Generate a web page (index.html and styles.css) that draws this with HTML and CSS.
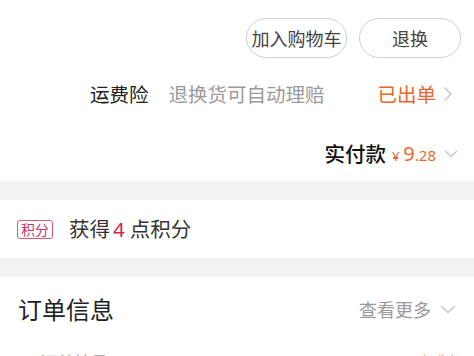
FILE: index.html
```html
<!DOCTYPE html>
<html lang="zh-CN">
<head>
<meta charset="utf-8">
<link rel="stylesheet" href="styles.css">
</head>
<body>
<div class="page">
  <div class="actions">
    <button class="pill pill-cart">加入购物车</button>
    <button class="pill pill-return">退换</button>
  </div>

  <div class="insure">
    <div class="insure-left">
      <span class="insure-label">运费险</span>
      <span class="insure-desc">退换货可自动理赔</span>
    </div>
    <div class="insure-right">
      <span class="insure-status">已出单</span>
      <svg class="chev-right" width="10" height="16" viewBox="0 0 10 16"><path d="M1.5 1.5 L8 8 L1.5 14.5" fill="none" stroke="#c4c4c4" stroke-width="1.4"/></svg>
    </div>
  </div>

  <div class="total">
    <span class="total-label">实付款</span>
    <span class="price"><span class="yen">¥</span><span class="int">9</span><span class="dec">.28</span></span>
    <svg class="chev-down" width="14" height="8" viewBox="0 0 14 8"><path d="M1 1 L7 6.5 L13 1" fill="none" stroke="#c4c4c4" stroke-width="1.3"/></svg>
  </div>

  <div class="band"></div>

  <div class="points">
    <span class="badge">积分</span>
    <span class="points-text">获得<span class="num">4</span>点积分</span>
  </div>

  <div class="band"></div>

  <div class="info-head">
    <span class="info-title">订单信息</span>
    <span class="info-more">查看更多
      <svg class="chev-down more-chev" width="16" height="9" viewBox="0 0 16 9"><path d="M1 1 L8 7.5 L15 1" fill="none" stroke="#c4c4c4" stroke-width="1.3"/></svg>
    </span>
  </div>

  <div class="info-row">
    <span class="info-key">订单编号</span>
    <span class="info-copy">复制</span>
  </div>
</div>
</body>
</html>
```

FILE: styles.css
```css
* { box-sizing: border-box; }
html, body {
  margin: 0;
  padding: 0;
  background: #ffffff;
}
body {
  font-family: "Noto Sans CJK SC", "Noto Sans", sans-serif;
  color: #222;
  width: 474px;
  height: 356px;
  overflow: hidden;
}
.page {
  display: flex;
  flex-direction: column;
}
.actions {
  display: flex;
  justify-content: flex-end;
  gap: 12px;
  padding: 18px 13px 0 0;
  height: 58px;
}
.pill {
  height: 40px;
  border: 1px solid #cfcfcf;
  border-radius: 20px;
  background: #fff;
  font-family: "Noto Sans CJK SC", sans-serif;
  font-size: 18px;
  color: #444;
  padding: 0;
  display: flex;
  align-items: center;
  justify-content: center;
  line-height: 1;
}
.pill-cart { width: 101px; }
.pill-return { width: 102px; }

.insure {
  height: 72px;
  display: flex;
  align-items: center;
  justify-content: space-between;
  padding: 0 21px 0 90px;
  font-size: 19.5px;
  line-height: 1;
}
.insure-left { display: flex; gap: 20px; }
.insure-label { color: #222; }
.insure-desc { color: #9a9a9a; }
.insure-right { display: flex; align-items: center; gap: 7px; }
.insure-status { color: #e8662e; }

.total {
  height: 51px;
  display: flex;
  align-items: center;
  justify-content: flex-end;
  padding: 0 16px 4px 0;
  line-height: 1;
}
.total-label {
  font-size: 20.5px;
  font-weight: 500;
  color: #111;
  margin-right: 6px;
}
.price {
  color: #e8692e;
  display: flex;
  align-items: baseline;
  margin-right: 8px;
  font-family: "Noto Sans", sans-serif;
}
.yen { font-size: 13px; margin-right: 4px; }
.int { font-size: 20px; }
.dec { font-size: 15px; }

.band {
  height: 19px;
  background: #f2f2f2;
  flex: none;
}
.points {
  height: 58px;
  display: flex;
  align-items: center;
  padding-left: 17px;
  gap: 16px;
  line-height: 1;
}
.badge {
  width: 36px;
  height: 19px;
  border: 1px solid #d45a7c;
  border-radius: 3px;
  color: #c9355d;
  font-size: 14px;
  display: flex;
  align-items: center;
  justify-content: center;
}
.points-text {
  font-size: 20.5px;
  color: #333;
}
.num {
  color: #d81f4b;
  font-family: "Noto Sans", sans-serif;
  margin: 0 5px 0 3px;
}

.info-head {
  height: 64px;
  display: flex;
  align-items: center;
  justify-content: space-between;
  padding: 0 18px 0 18px;
  line-height: 1;
}
.info-title {
  font-size: 24px;
  color: #222;
}
.info-more {
  font-size: 18px;
  color: #9a9a9a;
  display: flex;
  align-items: center;
  gap: 9px;
}
.info-row {
  display: flex;
  justify-content: space-between;
  padding: 12px 20px 0 40px;
  font-size: 17px;
  line-height: 1;
}
.info-key { color: #aaa; }
.info-copy { color: #e8b66e; }
```
